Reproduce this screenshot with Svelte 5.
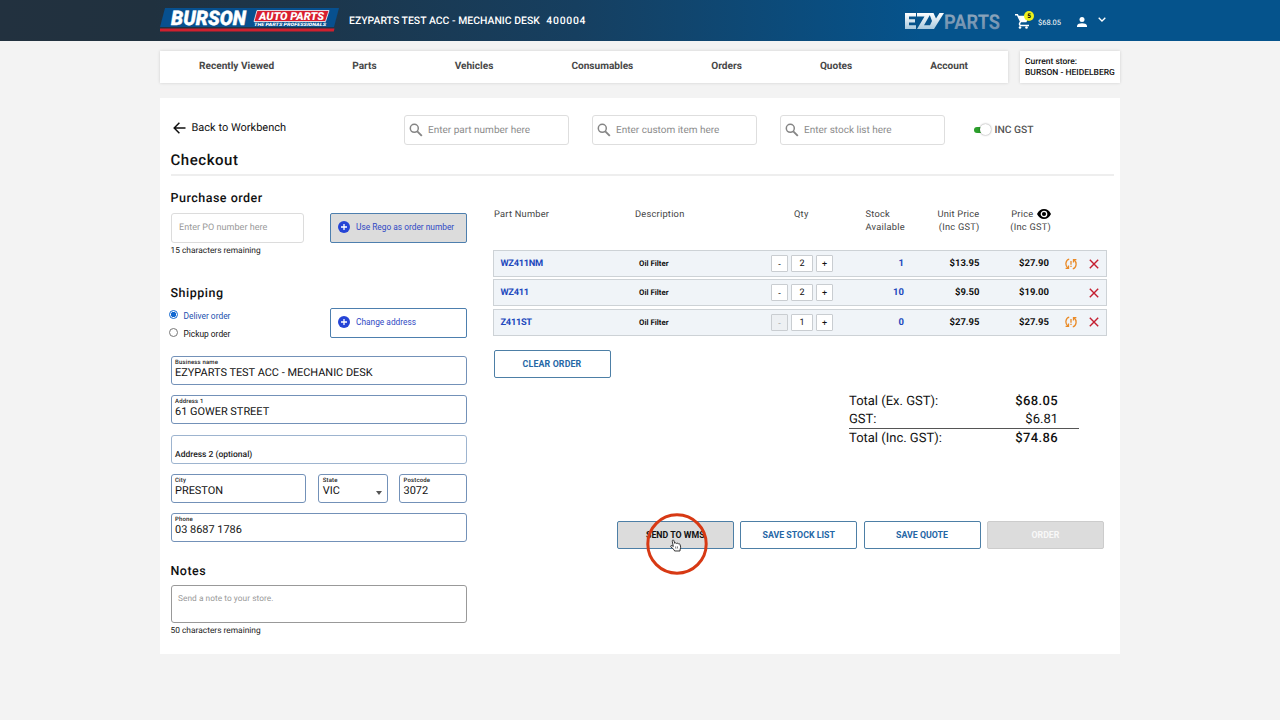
<script>
	let menu = ['Recently Viewed', 'Parts', 'Vehicles', 'Consumables', 'Orders', 'Quotes', 'Account'];
	let searches = ['Enter part number here', 'Enter custom item here', 'Enter stock list here'];

	let items = $state([
		{ part: 'WZ411NM', qty: 2, stock: 1, unit: '$13.95', price: '$27.90', warn: true },
		{ part: 'WZ411', qty: 2, stock: 10, unit: '$9.50', price: '$19.00', warn: false },
		{ part: 'Z411ST', qty: 1, stock: 0, unit: '$27.95', price: '$27.95', warn: true },
	]);

	let delivery = $state('deliver');
	let incGst = $state(true);

	function removeItem(part) {
		items = items.filter(item => item.part !== part);
	}
</script>

{#snippet plus()}
	<svg class="plus" viewBox="0 0 12 12">
		<circle cx="6" cy="6" r="6" fill="#2544d6" />
		<path d="M6 3v6M3 6h6" stroke="#fff" stroke-width="1.3" />
	</svg>
{/snippet}

{#snippet field(label, value)}
	<div class="field">
		<label>{label}</label>
		<span class="value">{value}</span>
	</div>
{/snippet}

<header>
	<div class="bar">
		<svg class="burson" viewBox="0 0 180 26">
			<path d="M5 1H179L174 20H0z" fill="#07508f" />
			<path d="M0 21.5H174.500L173.800 24.500H0z" fill="#d0202e" />
			<path d="M97 3.500H169L165.500 14.500H94z" fill="#d81f30" stroke="#fff" stroke-width=".8" />
			<text x="11" y="18.200" class="logo-big" textLength="75" lengthAdjust="spacingAndGlyphs">BURSON</text>
			<text x="99" y="13" class="logo-mid" textLength="65" lengthAdjust="spacingAndGlyphs">AUTO PARTS</text>
			<text x="94" y="19" class="logo-tiny" textLength="72" lengthAdjust="spacingAndGlyphs">THE PARTS PROFESSIONALS</text>
		</svg>
		<span class="account">EZYPARTS TEST ACC - MECHANIC DESK</span>
		<span class="account number">400004</span>
		<svg class="ezy" viewBox="0 -5 102 30">
			<defs>
				<linearGradient id="silver" x1="0" y1="0" x2="0" y2="1">
					<stop offset="0" stop-color="#93a9bd" />
					<stop offset="1" stop-color="#6288ab" />
				</linearGradient>
				<linearGradient id="light" x1="0" y1="0" x2="0" y2="1">
					<stop offset="0" stop-color="#fff" />
					<stop offset="1" stop-color="#a9c9de" />
				</linearGradient>
			</defs>
			<path d="M2 2H13V5.500H6V8.200H12V11.500H6V14.300H13V18H2z" fill="url(#light)" />
			<path d="M14 2H28L21 14.300H27L29 10L26 2H30.500L33 7.500L36.500 2H41L31 18H14L21.500 5.500H14z" fill="url(#light)" />
			<text x="41" y="17.700" class="ezy-parts" textLength="56" lengthAdjust="spacingAndGlyphs" fill="url(#silver)">PARTS</text>
		</svg>
		<svg class="cart" viewBox="0 0 21 20">
			<path d="M1 4.800h2.400l3.200 6.700-1 1.900q-.4 2 1.400 2.100h8M4.600 6.500h9.800l-2.500 5H6.600" fill="none" stroke="#fff" stroke-width="1.500" />
			<path d="M4.500 6H15l-3.200 5.800H7z" fill="#fff" />
			<circle cx="6" cy="17.500" r="1.300" fill="#fff" />
			<circle cx="12.500" cy="17.500" r="1.300" fill="#fff" />
			<circle cx="15" cy="6" r="5" fill="#eef01c" />
			<text x="15" y="8.400" class="count" text-anchor="middle">5</text>
		</svg>
		<span class="cart-total">$68.05</span>
		<svg class="user" viewBox="0 0 10 10">
			<circle cx="5" cy="2.600" r="2.500" fill="#fff" />
			<path d="M0 10V8.500Q1 6.200 5 6.200T10 8.500V10z" fill="#fff" />
		</svg>
		<svg class="chevron" viewBox="0 0 8 5">
			<path d="M.7.700 4 4 7.300.700" fill="none" stroke="#fff" stroke-width="1.300" />
		</svg>
	</div>
</header>

<div class="top">
	<nav>
		{#each menu as entry}
			<a>{entry}</a>
		{/each}
	</nav>
	<div class="store">Current store:<br /><span>BURSON - HEIDELBERG</span></div>
</div>

<main>
	<div class="tools">
		<div class="back">
			<svg viewBox="0 0 13 12"><path d="M12.500 6H1.200M6.400.8 1.200 6l5.200 5.200" fill="none" stroke="#111" stroke-width="1.500" /></svg>
			<span>Back to Workbench</span>
		</div>
		{#each searches as text}
			<div class="search">
				<svg viewBox="0 0 14 14">
					<circle cx="5.300" cy="5.300" r="4" fill="none" stroke="#858585" stroke-width="1.500" />
					<path d="M8.300 8.300l4.500 4.500" stroke="#858585" stroke-width="1.900" />
				</svg>
				<span>{text}</span>
			</div>
		{/each}
		<div class="gst">
			<button class="toggle" class:on={incGst} aria-label="Inc GST" onclick={() => (incGst = !incGst)}><i></i></button>
			<span>INC GST</span>
		</div>
	</div>
	<h1>Checkout</h1>

	<div class="columns">
		<section class="form">
			<h2>Purchase order</h2>
			<div class="line po">
				<div class="po-input">Enter PO number here</div>
				<button class="side rego">{@render plus()}<span>Use Rego as order number</span></button>
			</div>
			<p class="remaining">15 characters remaining</p>

			<h2 class="shipping">Shipping</h2>
			<div class="line">
				<div class="radios">
					<button class="choice" class:chosen={delivery === 'deliver'} onclick={() => (delivery = 'deliver')}><i></i><span>Deliver order</span></button>
					<button class="choice" class:chosen={delivery === 'pickup'} onclick={() => (delivery = 'pickup')}><i></i><span>Pickup order</span></button>
				</div>
				<button class="side change">{@render plus()}<span>Change address</span></button>
			</div>

			<div class="address">
				{@render field('Business name', 'EZYPARTS TEST ACC - MECHANIC DESK')}
				{@render field('Address 1', '61 GOWER STREET')}
				<div class="field empty"><label>Address 2 (optional)</label></div>
				<div class="city">
					{@render field('City', 'PRESTON')}
					<div class="field select">
						<label>State</label>
						<span class="value">VIC</span>
						<i></i>
					</div>
					{@render field('Postcode', '3072')}
				</div>
				{@render field('Phone', '03 8687 1786')}
			</div>

			<h2 class="notes">Notes</h2>
			<div class="note">Send a note to your store.</div>
			<p class="remaining">50 characters remaining</p>
		</section>

		<section class="order">
			<div class="head">
				<span>Part Number</span>
				<span>Description</span>
				<span>Qty</span>
				<span>Stock<br />Available</span>
				<span class="right">Unit Price<br />(Inc GST)</span>
				<span class="right price-head">
					<span>Price</span>
					<svg viewBox="0 0 14 10">
						<path d="M0 5Q2.500 0 7 0T14 5Q11.500 10 7 10T0 5z" fill="#000" />
						<circle cx="7" cy="5" r="2.700" fill="none" stroke="#fff" stroke-width="1.300" />
					</svg>
					<br />(Inc GST)
				</span>
			</div>

			<div class="rows">
				{#each items as item (item.part)}
					<div class="row">
						<span class="part">{item.part}</span>
						<span class="desc">Oil Filter</span>
						<div class="qty">
							<button disabled={item.qty < 2} onclick={() => item.qty--}>-</button>
							<span>{item.qty}</span>
							<button onclick={() => item.qty++}>+</button>
						</div>
						<span class="stock">{item.stock}</span>
						<span class="money">{item.unit}</span>
						<span class="money">{item.price}</span>
						<span class="warn">
							{#if item.warn}
								<svg viewBox="0 0 12 12" fill="none" stroke="#ea8a26" stroke-width="1.300">
									<path d="M4.200 1.200C.5 2.200-.2 7.300 2.800 9.900M.6 10.300h2.900V7.400" />
									<path d="M7.800 10.800c3.700-1 4.400-6.100 1.400-8.700M11.400 1.700H8.500v2.900" />
									<path d="M6 3v3.700M6 7.800v1.300" />
								</svg>
							{/if}
						</span>
						<button class="remove" aria-label="Remove" onclick={() => removeItem(item.part)}>
							<svg viewBox="0 0 10 10"><path d="M.8.800l8.400 8.400M9.200.800.8 9.200" stroke="#c41f30" stroke-width="1.400" /></svg>
						</button>
					</div>
				{/each}
			</div>

			<button class="action clear">CLEAR ORDER</button>

			<div class="totals">
				<div><span>Total (Ex. GST):</span><b>$68.05</b></div>
				<div class="gst-line"><span>GST:</span><em>$6.81</em></div>
				<div><span>Total (Inc. GST):</span><b>$74.86</b></div>
			</div>

			<div class="actions">
				<button class="action send">SEND TO WMS</button>
				<button class="action">SAVE STOCK LIST</button>
				<button class="action">SAVE QUOTE</button>
				<button class="action" disabled>ORDER</button>
			</div>
		</section>
	</div>
</main>

<svg class="pointer" viewBox="0 0 62 62">
	<circle cx="31" cy="31" r="29.200" fill="none" stroke="#d73914" stroke-width="3" />
	<path d="M27.300 33.500l-1-5.200c-.3-1.500 1.300-1.800 1.700-.5l.7 2.500c.6-.7 1.600-.6 1.900.2.600-.5 1.500-.4 1.800.4.700-.4 1.600 0 1.700.8l.6 2.500-.7 2.800v1h-5.400l-.6-1.300-3-2.700c-.9-1 .3-2 1.300-1.200z" fill="#fff" stroke="#222" stroke-width=".9" />
	<path d="M29.500 33.500l.4 2.200M31.300 33.300l.3 2.200" stroke="#222" stroke-width=".6" />
</svg>

<style>
	:global(body) {
		background: #f3f3f3;
		font-family: Roboto, "Open Sans", sans-serif;
		color: #111;
		text-rendering: geometricPrecision;
		overflow: hidden;
	}

	button {
		font: inherit;
		color: inherit;
		background: none;
		border: none;
		padding: 0;
		margin: 0;
		box-sizing: border-box;
		letter-spacing: inherit;
	}

	svg {
		display: block;
		flex: none;
	}

	header {
		height: 41px;
		background: linear-gradient(90deg, #22313f 0%, #20313f 12%, #163f60 45%, #05538c 72%, #05538c 100%);
	}
	.bar {
		width: 960px;
		height: 41px;
		margin: 0 auto;
		display: flex;
		align-items: center;
	}
	.burson {
		width: 180px;
		height: 26px;
		margin-top: -1px;
	}
	.burson text {
		font-style: italic;
		font-weight: 900;
		fill: #fff;
	}
	.logo-big {
		font-size: 20px;
		stroke: #fff;
		stroke-width: .4px;
	}
	.logo-mid {
		font-size: 11px;
	}
	.logo-tiny {
		font-size: 4.6px;
	}
	.account {
		color: #fff;
		font-size: 10.4px;
		font-weight: 500;
		margin-left: 9px;
		margin-top: -1px;
		letter-spacing: 0.03px;
		white-space: nowrap;
	}
	.account.number {
		margin-left: 6.5px;
		letter-spacing: 0.75px;
	}
	.ezy {
		width: 102px;
		height: 30px;
		margin-left: auto;
	}
	.ezy-parts {
		font-size: 20.5px;
		font-weight: 700;
	}
	.cart {
		width: 21px;
		height: 20px;
		margin: -1px 0 0 8.5px;
	}
	.count {
		font-size: 6.5px;
		font-weight: 700;
	}
	.cart-total {
		color: #fff;
		font-size: 7.5px;
		width: 24px;
		margin-left: 3.5px;
		margin-top: 4px;
	}
	.user {
		width: 10px;
		height: 10px;
		margin: 3px 0 0 15px;
	}
	.chevron {
		width: 8px;
		height: 5px;
		margin: -2px 14px 0 11px;
	}

	.top {
		width: 960px;
		margin: 10px auto 0;
		display: flex;
		gap: 12px;
		height: 32px;
	}
	nav, .store {
		background: #fff;
		box-shadow: 0 0 3px rgba(0, 0, 0, 0.15);
	}
	nav {
		flex: 1;
		display: flex;
		justify-content: space-around;
		align-items: center;
		font-size: 10.1px;
		font-weight: 700;
		color: #484848;
		padding-right: 1px;
	}
	nav a {
		margin-top: -1px;
	}
	.store {
		width: 100px;
		box-sizing: border-box;
		padding: 5.5px 0 0 5px;
		font-size: 8.5px;
		font-weight: 500;
		line-height: 11px;
		white-space: nowrap;
	}

	main {
		width: 960px;
		height: 556px;
		box-sizing: border-box;
		margin: 15px auto 0;
		padding: 17px 6.5px 0 10.5px;
		background: #fff;
	}
	.tools {
		display: flex;
		height: 30px;
	}
	.back {
		display: flex;
		align-items: center;
		width: 231px;
		padding: 0 0 5px 2.5px;
		box-sizing: border-box;
		margin-right: 2px;
		font-size: 11px;
		letter-spacing: 0.01px;
	}
	.back svg {
		width: 13px;
		height: 12px;
		margin-right: 5.5px;
	}
	.search {
		width: 165.5px;
		height: 30px;
		box-sizing: border-box;
		border: 1px solid #dedede;
		border-radius: 3px;
		margin-right: 22.5px;
		display: flex;
		align-items: center;
		padding-left: 4.5px;
		font-size: 10px;
		color: #8c8c8c;
	}
	.search svg {
		width: 14px;
		height: 14px;
		margin-right: 5px;
	}
	.gst {
		display: flex;
		align-items: center;
		margin: -1px 0 0 6px;
		font-size: 10.3px;
		font-weight: 500;
		color: #555;
	}
	.toggle {
		width: 17px;
		height: 12px;
		display: flex;
		align-items: center;
		margin-right: 4px;
	}
	.toggle::before {
		content: '';
		width: 12px;
		height: 6px;
		border-radius: 3px;
		background: #bbb;
	}
	.toggle.on::before {
		background: #2c9f2c;
	}
	.toggle i {
		width: 11px;
		height: 11px;
		flex: none;
		margin-left: -6px;
		border-radius: 50%;
		background: #fff;
		box-shadow: 0 0 2px rgba(0, 0, 0, 0.5);
	}

	h1 {
		margin: 0;
		height: 29px;
		line-height: 31px;
		font-size: 15px;
		font-weight: 500;
		letter-spacing: 0.55px;
		border-bottom: 2px solid #eee;
	}
	h2 {
		margin: 0;
		font-size: 12.5px;
		line-height: 17px;
		font-weight: 500;
		letter-spacing: 0.5px;
	}
	.columns {
		display: flex;
	}
	.form {
		width: 296.5px;
		padding-top: 14px;
	}
	.line {
		display: flex;
		justify-content: space-between;
	}
	.po {
		margin-top: 6px;
		height: 30px;
	}
	.po-input {
		width: 133.5px;
		box-sizing: border-box;
		border: 1px solid #dcdcdc;
		border-radius: 3px;
		padding-left: 7.5px;
		font-size: 9px;
		line-height: 29px;
		color: #999;
		letter-spacing: 0.04px;
	}
	.side {
		width: 137px;
		height: 30px;
		border: 1px solid #4d7fae;
		border-radius: 2px;
		display: flex;
		align-items: center;
		padding: 0 0 1px 7px;
		font-size: 8.35px;
		color: #3049c4;
		white-space: nowrap;
	}
	.rego {
		background: #dcdcdc;
		padding-bottom: 2px;
	}
	.plus {
		width: 12px;
		height: 12px;
		margin-right: 6px;
	}
	.remaining {
		margin: 3px 0 0;
		font-size: 8.4px;
		line-height: 11px;
		color: #222;
	}
	.shipping {
		margin-top: 27.5px;
		margin-bottom: 6px;
	}
	.radios {
		margin-left: -2px;
	}
	.choice {
		display: flex;
		align-items: center;
		height: 17.5px;
		font-size: 8.4px;
	}
	.choice i {
		width: 9px;
		height: 9px;
		box-sizing: border-box;
		border: 1px solid #777;
		border-radius: 50%;
		margin: -3px 6px 0 0;
	}
	.chosen {
		color: #1a4fae;
	}
	.chosen i {
		border-color: #1067d0;
		background: radial-gradient(circle, #1067d0 2.4px, #fff 3px);
	}
	.address {
		margin-top: 13.3px;
		display: flex;
		flex-direction: column;
		gap: 10.4px;
	}
	.field {
		height: 29px;
		box-sizing: border-box;
		border: 1px solid #7391b8;
		border-radius: 3px;
		padding: 2px 0 0 3.5px;
		display: flex;
		flex-direction: column;
	}
	.field label {
		font-size: 6px;
		line-height: 7px;
		font-weight: 500;
		color: #222;
		letter-spacing: 0.16px;
	}
	.field .value {
		font-size: 10.95px;
		line-height: 13px;
		white-space: nowrap;
	}
	.field.empty {
		border-color: #9db4cf;
	}
	.field.empty label {
		font-size: 8.5px;
		line-height: 34px;
		letter-spacing: 0;
	}
	.city {
		display: grid;
		grid-template-columns: 135px 70px 68px;
		justify-content: space-between;
	}
	.select {
		margin: 0 -1px 0 1px;
		position: relative;
	}
	.select i {
		position: absolute;
		right: 5px;
		bottom: 7px;
		border: 3px solid transparent;
		border-top: 4px solid #555;
		border-bottom: 0;
	}
	.notes {
		margin-top: 20.5px;
	}
	.note {
		height: 38px;
		box-sizing: border-box;
		margin-top: 5px;
		border: 1px solid #999;
		border-radius: 3px;
		padding: 8px 0 0 6.5px;
		font-size: 8.3px;
		line-height: 10px;
		color: #999;
		letter-spacing: 0.05px;
	}

	.order {
		width: 614px;
		margin-left: 25.5px;
		padding-top: 31.5px;
	}
	.head {
		display: grid;
		grid-template-columns: 141px 159px 71.5px 60px 54.5px 71.5px;
		padding-left: 1.5px;
		height: 42.5px;
		font-size: 9.3px;
		line-height: 13.5px;
		color: #444;
		letter-spacing: 0.22px;
	}
	.right {
		text-align: right;
		margin-right: 0.5px;
	}
	.price-head svg, .price-head span {
		display: inline-block;
		vertical-align: middle;
	}
	.price-head svg {
		width: 14px;
		height: 10px;
		margin-left: 1px;
	}
	.rows {
		display: flex;
		flex-direction: column;
		gap: 2.3px;
	}
	.row {
		height: 27px;
		box-sizing: border-box;
		border: 1px solid #cdd2d6;
		background: #f0f4f8;
		display: grid;
		grid-template-columns: 138.5px 132px 62px 71px 75.5px 69.5px 28px 22px;
		padding-left: 7px;
		align-items: center;
		font-size: 9.5px;
		font-weight: 700;
	}
	.part, .stock {
		color: #2148bd;
	}
	.part {
		font-size: 9.3px;
		letter-spacing: -0.3px;
	}
	.stock, .money {
		text-align: right;
	}
	.desc {
		font-size: 7.8px;
	}
	.qty {
		display: flex;
		justify-content: space-between;
		font-size: 9px;
		font-weight: 400;
	}
	.qty button, .qty span {
		width: 17px;
		height: 17px;
		line-height: 16px;
		text-align: center;
		box-sizing: border-box;
		border: 1px solid #c9cdd1;
		border-radius: 1px;
		background: #fff;
	}
	.qty span {
		width: 22px;
	}
	.qty button:disabled {
		background: #edf0f3;
		color: #aaa;
	}
	.warn svg {
		width: 12px;
		height: 12px;
		margin-left: auto;
	}
	.remove svg {
		width: 10px;
		height: 10px;
		margin-left: auto;
	}

	.action {
		width: 117px;
		height: 28px;
		border: 1px solid #4d7fa6;
		border-radius: 2px;
		color: #2566a5;
		font-size: 8.8px;
		font-weight: 700;
	}
	.clear {
		display: block;
		margin: 14px 0 0 1px;
		letter-spacing: 0.15px;
	}
	.totals {
		width: 230px;
		margin: 15.5px 0 0 356.5px;
		font-size: 13px;
		line-height: 18.5px;
	}
	.totals div {
		display: flex;
		justify-content: space-between;
		padding-right: 21px;
	}
	.totals b {
		font-weight: 500;
		letter-spacing: 0.35px;
	}
	.totals em {
		font-style: normal;
	}
	.totals .gst-line {
		border-bottom: 1px solid #555;
		line-height: 16.5px;
		height: 16.5px;
		margin-bottom: 1px;
	}
	.actions {
		display: flex;
		gap: 6.4px;
		margin: 72.5px 0 0 124.3px;
	}
	.send {
		background: #dcdcdc;
		color: #111;
	}
	.action:disabled {
		background: #dcdcdc;
		border-color: #ccc;
		color: #f8f8f8;
	}

	.pointer {
		position: absolute;
		left: 646px;
		top: 512.5px;
		width: 62px;
		height: 62px;
	}
</style>
